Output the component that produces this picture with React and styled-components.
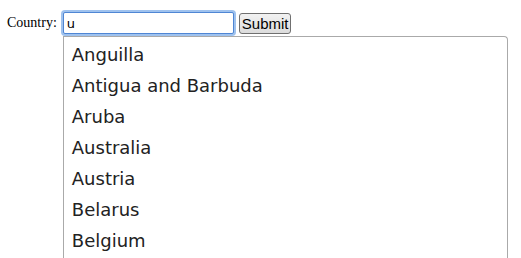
import React from "react";
import styled, { createGlobalStyle } from "styled-components";

const Global = createGlobalStyle`
  html, body { margin: 0; padding: 0; background: #fff; overflow: hidden; }
`;

const Page = styled.div`
  position: relative;
  width: 521px;
  height: 258px;
  padding: 12px 0 0 7px;
  box-sizing: border-box;
  overflow: hidden;
`;

const Row = styled.form`
  display: flex;
  align-items: center;
  margin: 0;
`;

const Label = styled.label`
  font-family: "Liberation Serif", serif;
  font-size: 14px;
  color: #000;
  margin-right: 6px;
`;

const Field = styled.div`
  position: relative;
`;

const Input = styled.input`
  box-sizing: border-box;
  width: 171px;
  height: 22px;
  margin: 0;
  padding: 1px 3px;
  border: 1px solid #4f86d4;
  border-radius: 2px;
  box-shadow: 0 0 0 2px #9fc2ee;
  outline: none;
  font-family: "DejaVu Sans", Tahoma, sans-serif;
  font-size: 13px;
  color: #000;
  background: #fff;
`;

const Button = styled.button`
  box-sizing: border-box;
  margin-left: 5px;
  height: 21px;
  padding: 0 2px;
  border: 1px solid #707070;
  border-radius: 3px;
  background: linear-gradient(#f2f2f2, #dcdcdc);
  font-family: "Liberation Sans", Arial, sans-serif;
  font-size: 15px;
  line-height: 17px;
  color: #000;
`;

const Menu = styled.ul`
  position: absolute;
  left: 0;
  top: 24px;
  width: 445px;
  height: 240px;
  margin: 0;
  padding: 2px 0 0;
  list-style: none;
  box-sizing: border-box;
  border: 1px solid #aaa;
  border-bottom: none;
  border-top-right-radius: 4px;
  background: #fff;
  overflow: hidden;
`;

const Item = styled.li`
  height: 31px;
  line-height: 31px;
  padding-left: 8px;
  font-family: "DejaVu Sans", Verdana, sans-serif;
  font-size: 18px;
  color: #222;
  white-space: nowrap;
`;

const countries = [
  "Anguilla",
  "Antigua and Barbuda",
  "Aruba",
  "Australia",
  "Austria",
  "Belarus",
  "Belgium",
];

export default function App() {
  return (
    <Page>
      <Global />
      <Row onSubmit={(e) => e.preventDefault()}>
        <Label htmlFor="country">Country:</Label>
        <Field>
          <Input id="country" defaultValue="u" />
          <Menu>
            {countries.map((c) => (
              <Item key={c}>{c}</Item>
            ))}
          </Menu>
        </Field>
        <Button type="submit">Submit</Button>
      </Row>
    </Page>
  );
}
